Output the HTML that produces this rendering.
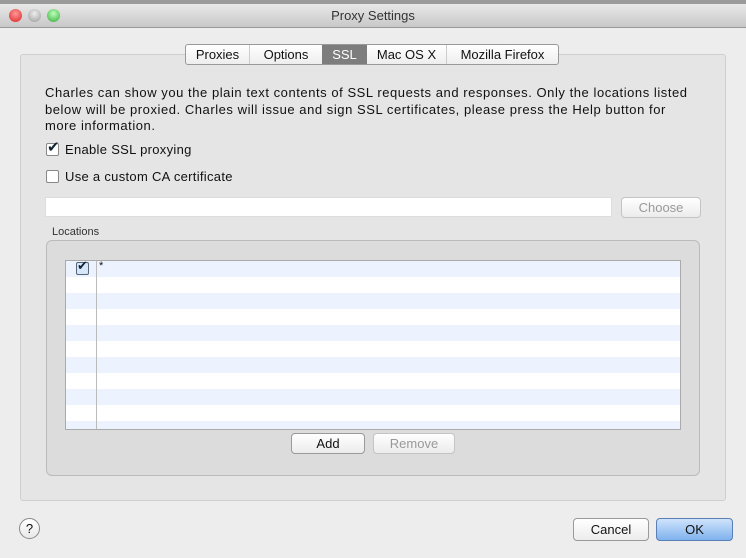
<!DOCTYPE html>
<html><head><style>
*{margin:0;padding:0;box-sizing:border-box}
body{width:746px;height:558px;background:#ededed;font-family:"Liberation Sans",sans-serif;font-size:13px;color:#111;position:relative;overflow:hidden}
.a{position:absolute}
.btn{position:absolute;border:1px solid #9a9a9a;border-radius:4px;background:linear-gradient(#fff,#ececec);text-align:center;font-size:13px;line-height:19px}
.cb{position:absolute;width:13px;height:13px;border:1px solid #888;border-radius:2px;background:#fff}
</style></head><body>
<div class="a" style="left:0;top:0;width:746px;height:5px;background:#9a9a9a"></div>
<div class="a" style="left:0;top:4px;width:746px;height:24px;background:linear-gradient(#e8e8e8,#c8c8c8);border-bottom:1px solid #999"></div>
<div class="a" style="left:9px;top:9px;width:13px;height:13px;border-radius:50%;background:radial-gradient(circle at 50% 35%,#f99,#d22)"></div>
<div class="a" style="left:28px;top:9px;width:13px;height:13px;border-radius:50%;background:radial-gradient(circle at 50% 35%,#eee,#999)"></div>
<div class="a" style="left:47px;top:9px;width:13px;height:13px;border-radius:50%;background:radial-gradient(circle at 50% 35%,#bfb,#3a3)"></div>
<div class="a" style="left:0;top:8px;width:746px;text-align:center;color:#333">Proxy Settings</div>

<div class="a" style="left:20px;top:54px;width:706px;height:447px;background:#e5e5e5;border:1px solid #cfcfcf;border-radius:3px"></div>
<div class="a" style="left:185px;top:44px;width:374px;height:21px;border:1px solid #999;border-radius:3px;background:linear-gradient(#fff,#eee);display:flex;font-size:13px;line-height:19px">
<div style="width:64px;text-align:center;border-right:1px solid #ccc">Proxies</div>
<div style="width:72px;text-align:center">Options</div>
<div style="width:45px;text-align:center;background:#7d7d7d;color:#fff">SSL</div>
<div style="width:80px;text-align:center;border-right:1px solid #ccc">Mac OS X</div>
<div style="flex:1;text-align:center">Mozilla Firefox</div>
</div>
<div class="a" style="left:45px;top:85px;width:655px;line-height:16.5px;letter-spacing:0.55px">Charles can show you the plain text contents of SSL requests and responses. Only the locations listed below will be proxied. Charles will issue and sign SSL certificates, please press the Help button for more information.</div>
<div class="cb" style="left:46px;top:143px"></div><div class="a" style="left:47px;top:138px;font-size:15px;color:#123">✔</div>
<div class="a" style="left:65px;top:142px;letter-spacing:0.3px">Enable SSL proxying</div>
<div class="cb" style="left:46px;top:170px"></div>
<div class="a" style="left:65px;top:169px;letter-spacing:0.3px">Use a custom CA certificate</div>
<div class="a" style="left:45px;top:197px;width:567px;height:20px;background:#fff;border:1px solid #ddd"></div>
<div class="btn" style="left:621px;top:197px;width:80px;height:21px;color:#999;border-color:#c4c4c4">Choose</div>
<div class="a" style="left:52px;top:226px;font-size:11px;color:#333">Locations</div>
<div class="a" style="left:46px;top:240px;width:654px;height:236px;background:#dcdcdc;border:1px solid #bbb;border-radius:6px"></div>
<div class="a" style="left:65px;top:260px;width:616px;height:170px;border:1px solid #aaa;background:repeating-linear-gradient(#edf3fe 0 16px,#fff 16px 32px)"></div>
<div class="a" style="left:96px;top:261px;width:1px;height:168px;background:#bbb"></div>
<div class="cb" style="left:76px;top:262px;background:#d6e6fb;border-color:#567"></div><div class="a" style="left:77px;top:258px;font-size:13px;color:#123">✔</div>
<div class="a" style="left:99px;top:260px;font-size:11px">*</div>
<div class="btn" style="left:291px;top:433px;width:74px;height:21px">Add</div>
<div class="btn" style="left:373px;top:433px;width:82px;height:21px;color:#999;border-color:#c4c4c4">Remove</div>
<div class="a" style="left:19px;top:518px;width:21px;height:21px;border-radius:50%;border:1px solid #888;background:linear-gradient(#fff,#e8e8e8);text-align:center;line-height:19px;font-size:13px">?</div>
<div class="btn" style="left:573px;top:518px;width:76px;height:23px;line-height:21px">Cancel</div>
<div class="btn" style="left:656px;top:518px;width:77px;height:23px;line-height:21px;background:linear-gradient(#cfe3fb,#7fb2ee);border-color:#5a7fb5">OK</div>
</body></html>
